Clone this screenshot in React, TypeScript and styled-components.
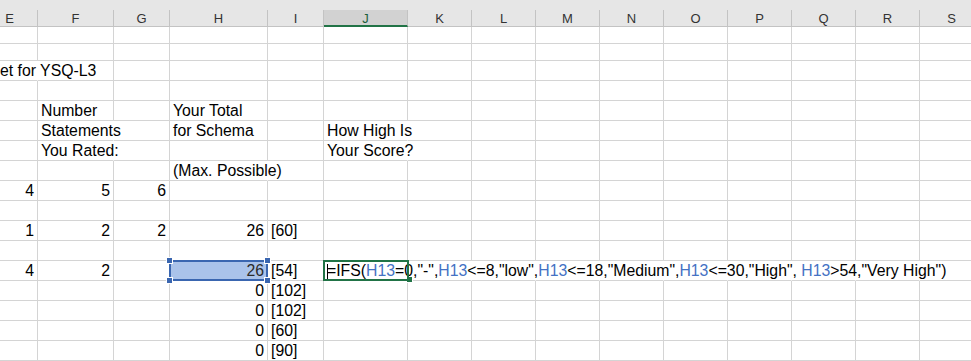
import React from "react";
import styled, { createGlobalStyle, css } from "styled-components";

const GlobalStyle = createGlobalStyle`
  html, body { margin: 0; padding: 0; background: #ffffff; overflow: hidden; }
  body { font-family: "Liberation Sans", Arial, sans-serif; }
`;

type Col = { id: string; w: number };
const COLS: Col[] = [
  { id: "E", w: 56 },
  { id: "F", w: 76 },
  { id: "G", w: 56 },
  { id: "H", w: 98 },
  { id: "I", w: 56 },
  { id: "J", w: 84 },
  ...["K", "L", "M", "N", "O", "P", "Q", "R", "S"].map((id) => ({ id, w: 64 })),
];

const ROW_HEIGHTS = [17, 17, ...Array(15).fill(20)];

const GRID = "#d4d4d4";
const REF_BLUE = "#4472c4";
const EXCEL_GREEN = "#217346";

const Viewport = styled.div`
  width: 971px;
  height: 361px;
  overflow: hidden;
  background: #ffffff;
`;

const Sheet = styled.div<{ $cols: string; $rows: string }>`
  display: grid;
  grid-template-columns: ${(p) => p.$cols};
  grid-template-rows: 10px 17px ${(p) => p.$rows};
  margin-left: -18px;
  width: max-content;
  font-family: "Liberation Sans", Arial, sans-serif;
`;

const TopStrip = styled.div`
  grid-column: 1 / -1;
  background: #e6e6e6;
`;

const HeaderCell = styled.div<{ $active?: boolean }>`
  display: flex;
  align-items: center;
  justify-content: center;
  background: ${(p) => (p.$active ? "#d2d2d2" : "#e6e6e6")};
  border-right: 1px solid #c3c3c3;
  border-bottom: ${(p) => (p.$active ? `2px solid ${EXCEL_GREEN}` : "1px solid #c3c3c3")};
  color: ${(p) => (p.$active ? "#1d5e3a" : "#333333")};
  font-size: 13px;
  padding-top: 1px;
  box-sizing: border-box;
`;

const Cell = styled.div<{
  $align: "left" | "right";
  $noRight?: boolean;
  $selected?: boolean;
  $editing?: boolean;
  $indent?: number;
}>`
  position: relative;
  display: flex;
  align-items: flex-end;
  justify-content: ${(p) => (p.$align === "right" ? "flex-end" : "flex-start")};
  box-sizing: border-box;
  padding: 0 3px 0 ${(p) => 3 + (p.$indent ?? 0)}px;
  border-right: 1px solid ${(p) => (p.$noRight ? "transparent" : GRID)};
  border-bottom: 1px solid ${GRID};
  white-space: nowrap;
  font-size: 15.8px;
  line-height: 18px;
  color: #000000;
  min-width: 0;
  ${(p) =>
    p.$selected &&
    css`
      background: #aac3ea;
      color: #2b2b2b;
      &::after {
        content: "";
        position: absolute;
        left: -1px;
        top: -1px;
        right: -1px;
        bottom: -1px;
        border: 2px solid #3a66b0;
        pointer-events: none;
      }
    `}
  ${(p) =>
    p.$editing &&
    css`
      z-index: 2;
      &::after {
        content: "";
        position: absolute;
        left: -1px;
        top: -1px;
        width: 86px;
        bottom: -1px;
        box-sizing: border-box;
        border: 2px solid ${EXCEL_GREEN};
        pointer-events: none;
      }
      &::before {
        content: "";
        position: absolute;
        left: 82px;
        bottom: -3px;
        width: 5px;
        height: 5px;
        background: ${EXCEL_GREEN};
        border: 1px solid #ffffff;
      }
    `}
`;

const Handle = styled.span<{ $x: "l" | "r"; $y: "t" | "b" }>`
  position: absolute;
  width: 5px;
  height: 5px;
  background: #3a66b0;
  border: 1px solid #ffffff;
  box-sizing: content-box;
  z-index: 3;
  ${(p) => (p.$x === "l" ? "left: -4px;" : "right: -4px;")}
  ${(p) => (p.$y === "t" ? "top: -4px;" : "bottom: -4px;")}
`;

const Ref = styled.span`
  color: ${REF_BLUE};
`;

const Caret = styled.span`
  display: inline-block;
  width: 1px;
  height: 15px;
  background: #000000;
  margin-right: -1px;
  align-self: center;
`;

const FormulaText = styled.span`
  display: inline-flex;
  align-items: flex-end;
`;

type CellDef = {
  text?: React.ReactNode;
  align?: "left" | "right";
  noRight?: boolean;
  selected?: boolean;
  editing?: boolean;
  indent?: number;
};

const FORMULA: Array<[string, boolean]> = [
  ["=IFS(", false],
  ["H13", true],
  ['=0,"-",', false],
  ["H13", true],
  ['<=8,"low",', false],
  ["H13", true],
  ['<=18,"Medium",', false],
  ["H13", true],
  ['<=30,"High", ', false],
  ["H13", true],
  ['>54,"Very High")', false],
];

const Formula = () => (
  <FormulaText>
    <Caret />
    <span>
      {FORMULA.map(([t, isRef], i) =>
        isRef ? <Ref key={i}>{t}</Ref> : <React.Fragment key={i}>{t}</React.Fragment>
      )}
    </span>
  </FormulaText>
);

const CELLS: Record<string, CellDef> = {
  "3-E": { text: "et for YSQ-L3", indent: 15, noRight: true },
  "5-F": { text: "Number" },
  "5-H": { text: "Your Total" },
  "6-F": { text: "Statements", noRight: true },
  "6-H": { text: "for Schema" },
  "6-J": { text: "How High Is", noRight: true },
  "7-F": { text: "You Rated:", noRight: true },
  "7-J": { text: "Your Score?", noRight: true },
  "8-H": { text: "(Max. Possible)", noRight: true },
  "9-E": { text: "4", align: "right" },
  "9-F": { text: "5", align: "right" },
  "9-G": { text: "6", align: "right" },
  "11-E": { text: "1", align: "right" },
  "11-F": { text: "2", align: "right" },
  "11-G": { text: "2", align: "right" },
  "11-H": { text: "26", align: "right" },
  "11-I": { text: "[60]" },
  "13-E": { text: "4", align: "right" },
  "13-F": { text: "2", align: "right" },
  "13-H": { text: "26", align: "right", selected: true },
  "13-I": { text: "[54]" },
  "13-J": { text: <Formula />, editing: true, noRight: true },
  "13-K": { noRight: true },
  "13-L": { noRight: true },
  "13-M": { noRight: true },
  "13-N": { noRight: true },
  "13-O": { noRight: true },
  "13-P": { noRight: true },
  "13-Q": { noRight: true },
  "13-R": { noRight: true },
  "14-H": { text: "0", align: "right" },
  "14-I": { text: "[102]" },
  "15-H": { text: "0", align: "right" },
  "15-I": { text: "[102]" },
  "16-H": { text: "0", align: "right" },
  "16-I": { text: "[60]" },
  "17-H": { text: "0", align: "right" },
  "17-I": { text: "[90]" },
};

export default function App() {
  const cols = COLS.map((c) => `${c.w}px`).join(" ");
  const rows = ROW_HEIGHTS.map((h) => `${h}px`).join(" ");
  return (
    <>
      <GlobalStyle />
      <Viewport>
        <Sheet $cols={cols} $rows={rows}>
          <TopStrip />
          {COLS.map((c) => (
            <HeaderCell key={c.id} $active={c.id === "J"}>
              {c.id}
            </HeaderCell>
          ))}
          {ROW_HEIGHTS.map((_, ri) => {
            const row = ri + 1;
            return COLS.map((c) => {
              const d = CELLS[`${row}-${c.id}`] ?? {};
              return (
                <Cell
                  key={`${row}-${c.id}`}
                  $align={d.align ?? "left"}
                  $noRight={d.noRight}
                  $selected={d.selected}
                  $editing={d.editing}
                  $indent={d.indent}
                >
                  {d.text}
                  {d.selected && (
                    <>
                      <Handle $x="l" $y="t" />
                      <Handle $x="r" $y="t" />
                      <Handle $x="l" $y="b" />
                      <Handle $x="r" $y="b" />
                    </>
                  )}
                </Cell>
              );
            });
          })}
        </Sheet>
      </Viewport>
    </>
  );
}
